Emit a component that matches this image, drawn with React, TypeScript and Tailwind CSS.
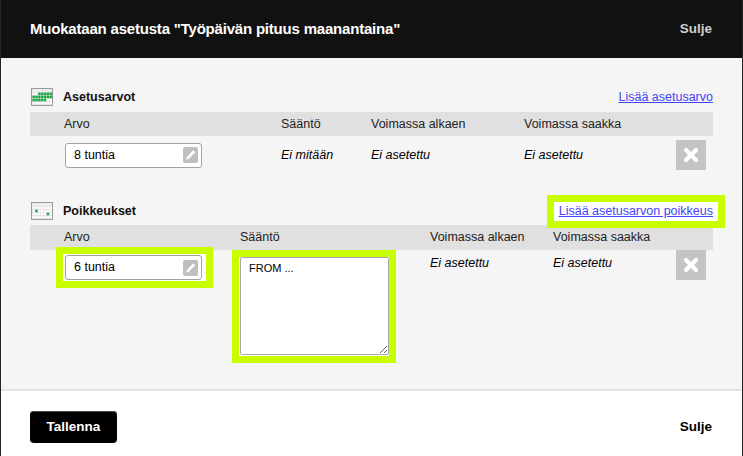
import type { ReactNode } from 'react';

function CalendarIcon({ green }: { green: Array<[number, number]> }) {
  const cells: ReactNode[] = [];
  for (let r = 0; r < 4; r++) {
    for (let c = 0; c < 7; c++) {
      const on = green.some(([gc, gr]) => gc === c && gr === r);
      cells.push(
        <rect
          key={`${r}-${c}`}
          x={1.5 + c * 2.86}
          y={4.6 + r * 3.1}
          width={2.3}
          height={2.5}
          fill={on ? '#12a944' : '#ffffff'}
        />,
      );
    }
  }
  return (
    <svg width="22" height="18" viewBox="0 0 22 18" className="shrink-0">
      <rect x="0.5" y="0.5" width="21" height="17" fill="#d9d9d9" stroke="#9a9a9a" />
      <rect x="1" y="1" width="20" height="3" fill="#ececec" />
      {cells}
    </svg>
  );
}

const fullGreen: Array<[number, number]> = [
  [2, 0], [3, 0], [4, 0], [5, 0], [6, 0],
  [0, 1], [1, 1], [2, 1], [3, 1], [4, 1], [5, 1], [6, 1],
  [0, 2], [1, 2], [2, 2], [3, 2], [4, 2],
];

const sparseGreen: Array<[number, number]> = [[1, 1], [5, 2]];

function DeleteButton() {
  return (
    <button type="button" aria-label="Poista" className="w-[30px] h-[30px] bg-[#c4c4c4] flex items-center justify-center">
      <svg width="16" height="16" viewBox="0 0 16 16">
        <path d="M3 3 L13 13 M13 3 L3 13" stroke="white" strokeWidth="4.2" strokeLinecap="round" />
      </svg>
    </button>
  );
}

function ValueInput({ value }: { value: string }) {
  return (
    <div className="w-[137px] h-[25px] bg-white border border-[#a3a3a3] rounded-[3px] flex items-center justify-between pl-[8px] pr-[3px] not-italic">
      <span className="text-[12.5px] text-black">{value}</span>
      <svg width="15" height="16" viewBox="0 0 15 16">
        <rect x="0" y="0" width="15" height="16" rx="2" fill="#bfbfbf" />
        <path d="M10.2 3.2 L12.3 5.3 L5.8 11.8 L3 12.8 L4 10 Z" fill="white" />
      </svg>
    </div>
  );
}

function SectionTitle({ title, icon, children }: { title: string; icon: ReactNode; children: ReactNode }) {
  return (
    <div className="flex items-center justify-between h-[20px]">
      <div className="flex items-center gap-[10px] pl-[1px]">
        {icon}
        <span className="text-[12.5px] font-bold text-[#111]">{title}</span>
      </div>
      {children}
    </div>
  );
}

export default function App() {
  return (
    <div className="w-[743px] h-[456px] flex flex-col border-x border-[#262626] bg-white overflow-hidden font-['Liberation_Sans',Arial,sans-serif]">
      <header className="h-[58px] shrink-0 bg-[#111] flex items-center justify-between pl-[29px] pr-[30px]">
        <h1 className="font-bold text-[15px] tracking-[-0.2px] text-white">Muokataan asetusta "Työpäivän pituus maanantaina"</h1>
        <button type="button" className="font-bold text-[13.5px] text-[#cfcfcf]">
          Sulje
        </button>
      </header>

      <main className="h-[331px] shrink-0 bg-[#f5f5f5] px-[29px] pt-[29px]">
        <SectionTitle title="Asetusarvot" icon={<CalendarIcon green={fullGreen} />}>
          <a href="#" className="text-[12.5px] text-[#4343f5] underline">
            Lisää asetusarvo
          </a>
        </SectionTitle>

        <div className="mt-[5px] h-[24px] bg-[#e0e0e0] pl-[34px] pr-[6px] grid grid-cols-[217px_90px_153px_152px_30px] items-center text-[12.5px] text-[#222]">
          <span>Arvo</span>
          <span>Sääntö</span>
          <span>Voimassa alkaen</span>
          <span>Voimassa saakka</span>
          <span />
        </div>
        <div className="pt-[4px] pl-[35px] pr-[6px] grid grid-cols-[216px_90px_153px_152px_30px] items-center text-[12.5px] italic text-black">
          <ValueInput value="8 tuntia" />
          <span>Ei mitään</span>
          <span>Ei asetettu</span>
          <span>Ei asetettu</span>
          <DeleteButton />
        </div>

        <div className="mt-[31px]">
          <SectionTitle title="Poikkeukset" icon={<CalendarIcon green={sparseGreen} />}>
            <div className="h-[33px] -mr-[12px] border-[7px] border-[#c8ff00] bg-white pl-[5px] pr-[5px] flex items-center">
              <a href="#" className="text-[12.5px] text-[#4343f5] underline">
                Lisää asetusarvon poikkeus
              </a>
            </div>
          </SectionTitle>
        </div>

        <div className="mt-[4px] h-[25px] bg-[#e0e0e0] pl-[34px] pr-[6px] grid grid-cols-[176px_190px_123px_123px_30px] items-center text-[12.5px] text-[#222]">
          <span>Arvo</span>
          <span>Sääntö</span>
          <span>Voimassa alkaen</span>
          <span>Voimassa saakka</span>
          <span />
        </div>
        <div className="pl-[34px] pr-[6px] grid grid-cols-[176px_190px_123px_123px_30px] items-start text-[12.5px] italic text-black">
          <div className="-ml-[8px] -mt-[3px] w-[157px] border-[7px] border-[#c8ff00] bg-white pl-[2px] pt-[1px] pb-[1px]">
            <ValueInput value="6 tuntia" />
          </div>
          <div className="-ml-[8px] w-[164px] border-[7px] border-[#c8ff00] bg-white pl-[1px] pb-[1px]">
            <textarea
              defaultValue="FROM ..."
              className="block w-[149px] h-[98px] bg-white border border-[#a8a8a8] rounded-[2px] px-[8px] pt-[3px] text-[11px] leading-[14px] not-italic text-black font-['Liberation_Sans',Arial,sans-serif] outline-none"
            />
          </div>
          <span className="pt-[4px]">Ei asetettu</span>
          <span className="pt-[4px]">Ei asetettu</span>
          <DeleteButton />
        </div>
      </main>

      <footer className="flex-1 border-t-2 border-[#e3e3e3] bg-white flex items-start justify-between pl-[29px] pr-[30px] pt-[20px]">
        <button
          type="button"
          className="w-[87px] h-[32px] rounded-[4px] bg-black text-white font-bold text-[13.5px] shadow-[inset_0_1px_0_#4a4a4a]"
        >
          Tallenna
        </button>
        <button type="button" className="font-bold text-[13.5px] text-black leading-[32px]">
          Sulje
        </button>
      </footer>
    </div>
  );
}
